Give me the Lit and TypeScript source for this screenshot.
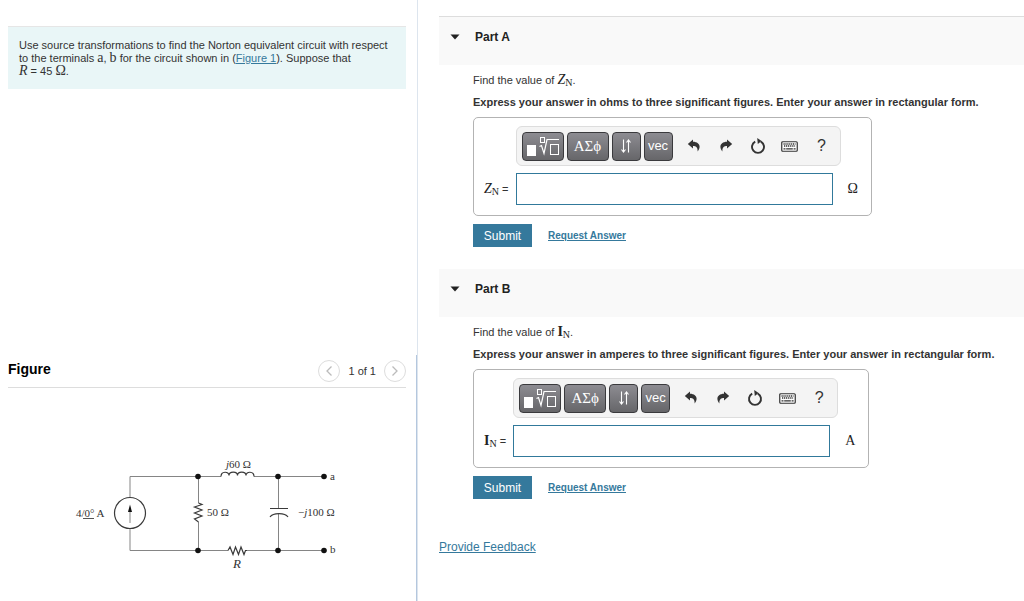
import { LitElement, html, svg, css } from "lit";
import { customElement, property, state } from "lit/decorators.js";

const undoIcon = html`<svg width="14" height="14" viewBox="0 0 14 14" aria-hidden="true">
  <path d="M6 0.4 L0.8 5 L6 9.6 V7 C9 7 10.800 8.400 10.600 12.400 C14.800 7.400 12 2.900 6 2.800 Z" fill="currentColor" />
</svg>`;

const redoIcon = html`<svg width="14" height="14" viewBox="0 0 14 14" aria-hidden="true">
  <path d="M8 0.4 L13.2 5 L8 9.6 V7 C5 7 3.200 8.400 3.400 12.400 C-0.800 7.400 2 2.900 8 2.800 Z" fill="currentColor" />
</svg>`;

const resetIcon = html`<svg width="16" height="16" viewBox="0 0 16 16" aria-hidden="true">
  <path d="M10.8 3.6 A6 6 0 1 1 5.2 3.6" fill="none" stroke="currentColor" stroke-width="1.9" />
  <path d="M7.2 0 L11.6 3 L7.8 6 Z" fill="currentColor" />
</svg>`;

const keyboardIcon = html`<svg width="17" height="11" viewBox="0 0 17 11" aria-hidden="true">
  <rect x="0.75" y="0.75" width="15.5" height="9.5" rx="1" fill="#fff" stroke="currentColor" stroke-width="1.2" />
  <path d="M2.5 3h12M3 5h11.5" stroke="currentColor" stroke-width="1.3" stroke-dasharray="1.2 0.7" />
  <path d="M2.5 7.8h2M5.2 7.8h6.6M12.6 7.8h2" stroke="currentColor" stroke-width="1.3" />
</svg>`;

const templatesIcon = html`<svg width="34" height="22" viewBox="0 0 34 22" aria-hidden="true">
  <rect x="1" y="10" width="9" height="11" fill="#fff" />
  <rect x="14.500" y="2.500" width="4" height="5" fill="none" stroke="#fff" />
  <path d="M13.500 11.500 L15.500 10.500 L18 18.500 L21 4.500 H33" fill="none" stroke="#fff" stroke-width="1.2" />
  <rect x="24.500" y="9.500" width="8" height="10" fill="none" stroke="#fff" />
</svg>`;

const arrowsIcon = html`<svg width="12" height="14" viewBox="0 0 12 14" aria-hidden="true">
  <path d="M3.500 0.500V13M1.500 10.500L3.500 13L5.500 10.500M8.500 13.500V1M6.500 3.500L8.500 1L10.500 3.500" fill="none" stroke="#fff" stroke-width="1.1" />
</svg>`;

@customElement("answer-part")
export class AnswerPart extends LitElement {
  @property() name = "";
  @property() symbol = "";
  @property() variant = "italic";
  @property() quantity = "";
  @property() unit = "";
  @state() private open = true;

  static styles = css`
    :host { display: block; }
    * { box-sizing: border-box; }
    .heading { margin: 0; }
    .toggle {
      display: flex; align-items: flex-start; gap: 15px;
      width: 100%; height: 48px; padding: 13px 0 0 11px;
      border: 0; background: #f9f9f9; color: #222;
      font: bold 12px/14px "Liberation Sans", Arial, sans-serif; text-align: left;
    }
    .caret { display: block; margin-top: 4px; }
    .body { padding: 8px 0 0 34px; }
    .line { margin: 0 0 8px; line-height: 14px; white-space: nowrap; }
    .strong { font-weight: bold; }
    .math { font-family: "Liberation Serif", serif; font-size: 14px; line-height: 14px; color: #222; }
    .italic { font-style: italic; }
    .bold { font-weight: bold; }
    .sub { font-size: 10px; line-height: 1px; vertical-align: -2px; }
    .answer {
      display: inline-grid; grid-template-columns: auto 325px auto;
      column-gap: 7px; row-gap: 7px; align-items: center;
      padding: 8px 13px 10px 10px; border: 1px solid #b3b3b3; border-radius: 5px; vertical-align: top;
    }
    .toolbar {
      grid-column: 2; grid-row: 1; display: flex; align-items: center; gap: 3px;
      height: 40px; padding-left: 5px;
      background: #f4f4f4; border: 1px solid #ddd; border-radius: 6px;
    }
    .key {
      display: flex; align-items: center; justify-content: center; flex: none;
      width: 29px; height: 29px; padding: 0;
      border: 1px solid #3a3a3d; border-radius: 4px;
      background: linear-gradient(#8d8c92, #666669); color: #fff;
      font: 13px/16px "Liberation Sans", Arial, sans-serif;
    }
    .wide { width: 42px; }
    .greek { font-family: "Liberation Serif", serif; font-size: 15px; }
    .tools { display: flex; margin-left: 2px; }
    .tool {
      display: flex; align-items: center; justify-content: center;
      width: 32px; height: 28px; padding: 0; border: 0; background: none; color: #333;
      font: 16px/18px "Liberation Sans", Arial, sans-serif;
    }
    .label { grid-column: 1; grid-row: 2; white-space: nowrap; }
    .field {
      grid-column: 2; grid-row: 2;
      width: 317px; height: 32px; padding: 0 6px;
      border: 1px solid #31799b; border-radius: 0; background: #fff;
      font: 14px "Liberation Sans", Arial, sans-serif;
    }
    .unit { grid-column: 3; grid-row: 2; }
    .actions { display: flex; align-items: center; gap: 16px; margin-top: 8px; }
    .submit {
      width: 59px; height: 23px; padding: 0; border: 0; background: #35799c; color: #fff;
      font: 12px/14px "Liberation Sans", Arial, sans-serif;
    }
    .request { color: #35799c; font-size: 10px; line-height: 12px; font-weight: bold; }
  `;

  private renderSymbol() {
    return html`<span class="math"><span class=${this.variant}>${this.symbol}</span><span class="sub">N</span></span>`;
  }

  render() {
    return html`
      <h2 class="heading">
        <button class="toggle" aria-expanded=${this.open ? "true" : "false"} @click=${() => (this.open = !this.open)}>
          <svg class="caret" width="10" height="6" viewBox="0 0 10 6" aria-hidden="true"><path d="M0.5 0.5h9L5 5.5z" fill="#222" /></svg>
          ${this.name}
        </button>
      </h2>
      ${this.open ? html`<div class="body">
        <p class="line">Find the value of ${this.renderSymbol()}.</p>
        <p class="line strong">Express your answer in ${this.quantity} to three significant figures. Enter your answer in rectangular form.</p>
        <div class="answer">
          <div class="toolbar" role="toolbar" aria-label="Equation tools">
            <button class="key wide" aria-label="Templates">${templatesIcon}</button>
            <button class="key wide greek" aria-label="Symbols">ΑΣϕ</button>
            <button class="key" aria-label="Arrows">${arrowsIcon}</button>
            <button class="key">vec</button>
            <div class="tools">
              <button class="tool" aria-label="Undo">${undoIcon}</button>
              <button class="tool" aria-label="Redo">${redoIcon}</button>
              <button class="tool" aria-label="Reset">${resetIcon}</button>
              <button class="tool" aria-label="Keyboard shortcuts">${keyboardIcon}</button>
              <button class="tool" aria-label="Help">?</button>
            </div>
          </div>
          <label class="label" for="value">${this.renderSymbol()} =</label>
          <input class="field" id="value" type="text" />
          <span class="math unit">${this.unit}</span>
        </div>
        <div class="actions">
          <button class="submit">Submit</button>
          <a class="request" href="#">Request Answer</a>
        </div>
      </div>` : null}
    `;
  }
}

const nodes = [[198, 476], [278, 476], [324, 476], [198, 550], [278, 550], [324, 550]];

@customElement("circuit-figure")
export class CircuitFigure extends LitElement {
  static styles = css`
    :host { display: block; }
    .drawing { display: block; }
    .wire { fill: none; stroke: #858585; stroke-width: 1; }
    .part { fill: none; stroke: #3a3a3a; stroke-width: 1.2; }
    .thin { fill: none; stroke: #555; stroke-width: 1; }
    .dot { fill: #111; }
    .text { font: 11px "Liberation Serif", serif; fill: #333; }
    .it { font-style: italic; }
    .big { font-size: 13px; }
  `;

  render() {
    return html`<svg class="drawing" width="300" height="130" viewBox="60 450 300 130" role="img" aria-label="Circuit diagram">
      <path class="wire" d="M130 497.500V476.500H221M254 476.500H324M198.500 476V503M198.500 522V550M130 528.500V550.500H228M247 550.500H324M278.500 476V508.500M278.500 514V550" />
      <circle class="part" cx="130" cy="513" r="15.500" />
      <path class="wire" d="M130 523V510" />
      <path d="M130 504.500L132 512H128Z" fill="#111" />
      <path class="part" d="M221 476.500C221 471 229 471 229 475.500C229 471 237.500 471 237.500 475.500C237.500 471 246 471 246 475.500C246 471 254 471 254 476.500" />
      <path class="part" d="M198.500 503L202 504.500L194.500 507L202 510L194.500 513L202 516L194.500 519L198.500 522" />
      <path class="part" d="M228 550.500L230 547L233 554.500L235.500 547L238.500 554.500L241 547L244 554.500L245.500 550.500H247" />
      <path class="part" d="M270 508.500H288M270 517C273 512.500 285 512.500 288 517" />
      ${nodes.map(([x, y]) => svg`<circle class="dot" cx=${x} cy=${y + 0.5} r="2.8" />`)}
      <text class="text" x="226" y="468"><tspan class="it">j</tspan>60 Ω</text>
      <text class="text" x="207" y="516">50 Ω</text>
      <text class="text" x="298" y="516">−<tspan class="it">j</tspan>100 Ω</text>
      <text class="text" x="76" y="517">4/0° A</text>
      <path class="thin" d="M83 518.500H94" />
      <text class="text" x="330" y="480">a</text>
      <text class="text" x="330" y="553">b</text>
      <text class="text it big" x="233" y="568">R</text>
    </svg>`;
  }
}

@customElement("app-root")
export class AppRoot extends LitElement {
  static styles = css`
    :host {
      display: grid; grid-template-columns: 418fr 606fr; min-height: 100vh;
      background: #fff; color: #333; font: 11px/13px "Liberation Sans", Arial, sans-serif;
    }
    * { box-sizing: border-box; }
    .left { display: flex; flex-direction: column; border-right: 1px solid #dde5ee; }
    .problem { flex: 1; padding: 26px 11px 0 8px; }
    .statement {
      margin: 0; padding: 12px 11px 11px; background: #e9f6f7; border-top: 1px solid #e6e6e6;
    }
    .math { font-family: "Liberation Serif", serif; font-size: 14px; line-height: 1px; }
    .it { font-style: italic; }
    .link { color: #35799c; }
    .figure { padding: 0 10px 21px 8px; border-right: 1px solid #b4c7de; }
    .bar {
      display: flex; align-items: center; justify-content: space-between;
      height: 33px; border-bottom: 1px solid #ddd;
    }
    .title { margin: 0; padding-bottom: 4px; color: #000; font-size: 14px; line-height: 16px; }
    .pager { display: flex; align-items: center; gap: 8px; }
    .step {
      display: flex; align-items: center; justify-content: center;
      width: 22px; height: 22px; padding: 0; border: 1px solid #ddd; border-radius: 50%; background: #fff;
    }
    .canvas { padding: 62px 0 0 52px; }
    .right { padding: 16px 0 0 21px; min-width: 0; }
    .parts { display: grid; gap: 22px; border-top: 1px solid #ddd; }
    .feedback { display: inline-block; margin-top: 41px; font-size: 12px; line-height: 14px; }
  `;

  render() {
    return html`
      <section class="left">
        <div class="problem">
          <p class="statement">
            Use source transformations to find the Norton equivalent circuit with respect
            to the terminals <span class="math">a</span>, <span class="math">b</span> for the circuit shown in
            (<a class="link" href="#figure">Figure 1</a>). Suppose that<br />
            <span class="math it">R</span> = 45 <span class="math">Ω</span>.
          </p>
        </div>
        <div class="figure" id="figure">
          <div class="bar">
            <h2 class="title">Figure</h2>
            <div class="pager">
              <button class="step" aria-label="Previous figure">
                <svg width="8" height="12" viewBox="0 0 8 12"><path d="M6.500 1.500L2 6l4.500 4.500" fill="none" stroke="#bbb" stroke-width="1.300" /></svg>
              </button>
              <span>1 of 1</span>
              <button class="step" aria-label="Next figure">
                <svg width="8" height="12" viewBox="0 0 8 12"><path d="M1.500 1.500L6 6l-4.500 4.500" fill="none" stroke="#bbb" stroke-width="1.300" /></svg>
              </button>
            </div>
          </div>
          <div class="canvas"><circuit-figure></circuit-figure></div>
        </div>
      </section>
      <main class="right">
        <div class="parts">
          <answer-part name="Part A" symbol="Z" variant="italic" quantity="ohms" unit="Ω"></answer-part>
          <answer-part name="Part B" symbol="I" variant="bold" quantity="amperes" unit="A"></answer-part>
        </div>
        <a class="link feedback" href="#">Provide Feedback</a>
      </main>
    `;
  }
}
